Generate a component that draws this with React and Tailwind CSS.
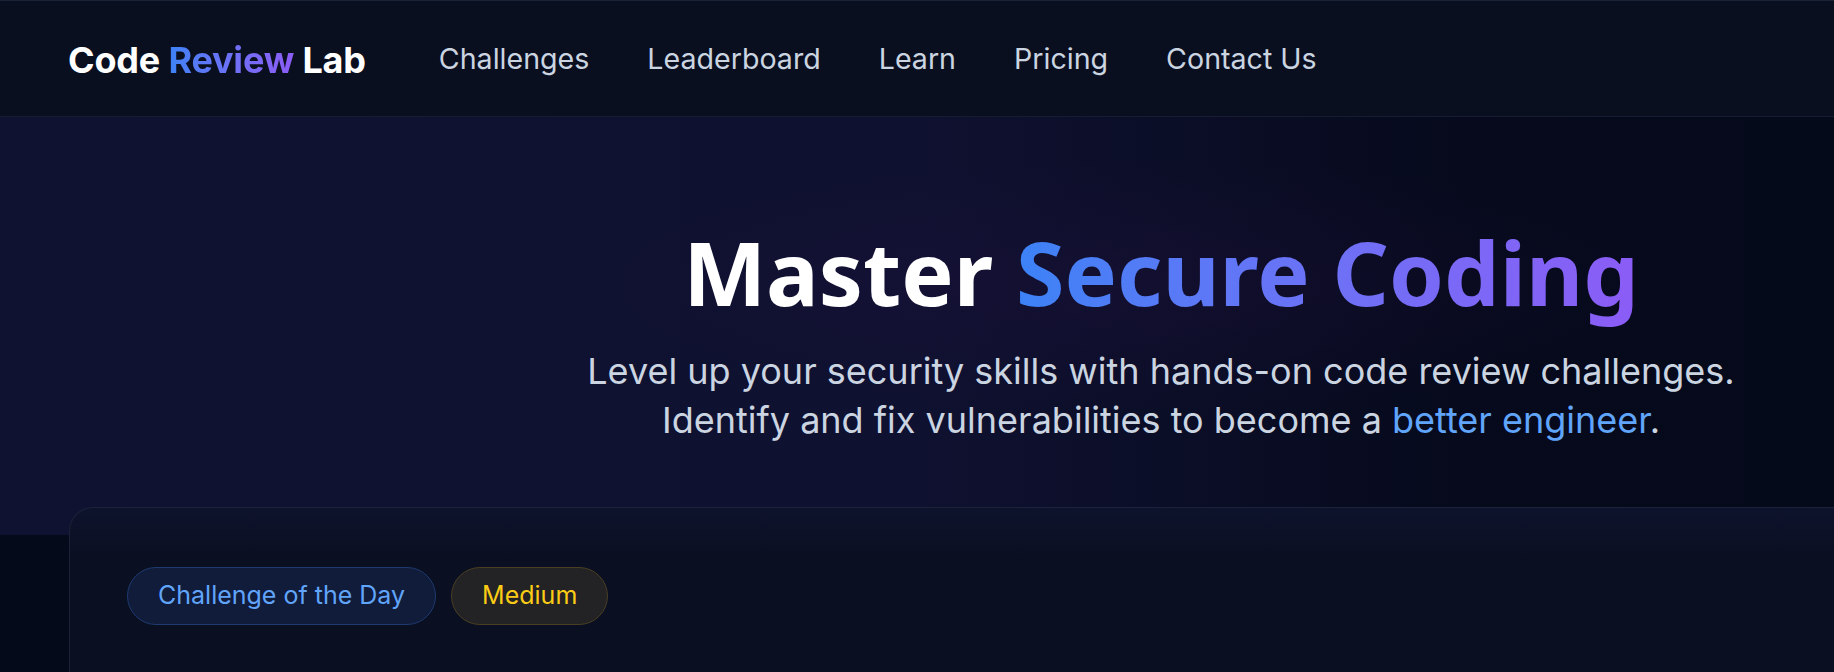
const navLinks = ['Challenges', 'Leaderboard', 'Learn', 'Pricing', 'Contact Us'];

export default function App() {
  return (
    <div className="h-screen w-full overflow-hidden bg-[#050a1a] font-['Inter',sans-serif]">
      {/* top nav */}
      <nav className="flex h-[117px] items-center border-t border-b border-t-[#1a2236] border-b-[#161d33] bg-[#0a0f1f] px-[68px] pt-[2px]">
        <div className="text-[36px] font-bold tracking-[-0.2px] text-white">
          Code{' '}
          <span className="bg-gradient-to-r from-[#3b82f6] to-[#8b5cf6] bg-clip-text text-transparent">Review</span>{' '}
          Lab
        </div>
        <ul className="ml-[73px] flex items-center gap-[58px]">
          {navLinks.map((link) => (
            <li key={link} className="text-[28.6px] text-[#cbd5e1]">
              {link}
            </li>
          ))}
        </ul>
      </nav>

      {/* hero */}
      <section className="h-[418px] bg-[radial-gradient(ellipse_at_62%_40%,_rgba(50,18,80,0.2),_transparent_35%),linear-gradient(90deg,_#0f1231_0%,_#0f1130_50%,_#060a1c_80%,_#050a1b_100%)] pl-[488px]">
        <div className="flex flex-col items-center pt-[111px] text-center">
          <h1 className="font-['Noto_Sans',sans-serif] text-[88px] font-bold leading-none tracking-normal text-white">
            Master{' '}
            <span className="bg-gradient-to-r from-[#3b82f6] to-[#8b5cf6] bg-clip-text text-transparent">Secure Coding</span>
          </h1>
          <p className="mt-[31px] text-[36px] leading-[49px] text-[#cbd5e1]">
            Level up your security skills with hands-on code review challenges.
            <br />
            Identify and fix vulnerabilities to become a <span className="text-[#60a5fa]">better engineer</span>.
          </p>
        </div>
      </section>

      {/* challenge card */}
      <div className="-mt-[28px] pl-[69px]">
        <div className="h-[165px] rounded-tl-3xl border-t border-l border-[#1c2238] bg-gradient-to-b from-[#0e132d] to-[#0a0f22] to-[30%] pl-[57px] pt-[59px]">
          <div className="flex gap-[15px]">
            <span className="flex h-[58px] items-center rounded-full border border-[#1e3a6e] bg-[#111b3a] px-[30px] text-[25px] text-[#60a5fa]">
              Challenge of the Day
            </span>
            <span className="flex h-[58px] items-center rounded-full border border-[#4a3f22] bg-[#232225] px-[30px] text-[25px] text-[#facc15]">
              Medium
            </span>
          </div>
        </div>
      </div>
    </div>
  );
}
